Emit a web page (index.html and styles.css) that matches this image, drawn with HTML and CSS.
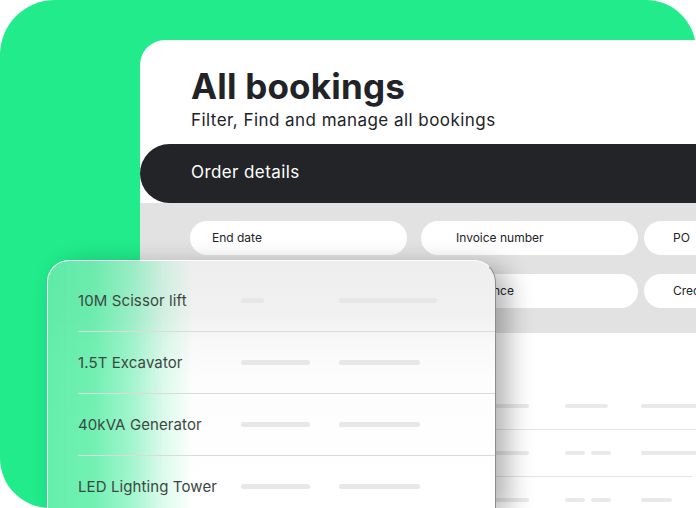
FILE: index.html
```html
<!DOCTYPE html>
<html lang="en">
<head>
<meta charset="utf-8">
<title>All bookings</title>
<link rel="stylesheet" href="styles.css">
</head>
<body>
<div class="stage">
  <div class="card">
    <div class="head">
      <h1 class="title">All bookings</h1>
      <p class="sub">Filter, Find and manage all bookings</p>
    </div>
    <div class="bar">Order details</div>
    <div class="filters">
      <div class="frow">
        <div class="pill p1">End date</div>
        <div class="pill p2">Invoice number</div>
        <div class="pill p3">PO</div>
      </div>
      <div class="frow">
        <div class="pill p1">Start date</div>
        <div class="pill p2">Reference</div>
        <div class="pill p3">Credit note</div>
      </div>
    </div>
    <div class="table">
      <div class="trow">
        <div class="cell"><span class="sk wa"></span></div>
        <div class="cell"><span class="sk wb"></span></div>
        <div class="cell"><span class="sk wc"></span></div>
      </div>
      <div class="trow short">
        <div class="cell"><span class="sk wa"></span></div>
        <div class="cell"><span class="sk ws"></span><span class="sk ws2"></span></div>
        <div class="cell"><span class="sk wc"></span></div>
      </div>
      <div class="trow last">
        <div class="cell"><span class="sk wa"></span></div>
        <div class="cell"><span class="sk ws"></span><span class="sk ws2"></span></div>
        <div class="cell"><span class="sk wd"></span></div>
      </div>
    </div>
  </div>

  <div class="glass">
    <div class="grow first">
      <span class="gname">10M Scissor lift</span>
      <span class="gcol"><span class="sk g1s"></span></span>
      <span class="gcol"><span class="sk g2l"></span></span>
    </div>
    <div class="grow">
      <span class="gname">1.5T Excavator</span>
      <span class="gcol"><span class="sk g1"></span></span>
      <span class="gcol"><span class="sk g2"></span></span>
    </div>
    <div class="grow">
      <span class="gname">40kVA Generator</span>
      <span class="gcol"><span class="sk g1"></span></span>
      <span class="gcol"><span class="sk g2"></span></span>
    </div>
    <div class="grow">
      <span class="gname">LED Lighting Tower</span>
      <span class="gcol"><span class="sk g1"></span></span>
      <span class="gcol"><span class="sk g2"></span></span>
    </div>
  </div>
</div>
</body>
</html>
```

FILE: styles.css
```css
html, body {
  margin: 0;
  padding: 0;
  width: 696px;
  height: 508px;
  overflow: hidden;
  background: #ffffff;
  font-family: "Inter", "Noto Sans", "DejaVu Sans", sans-serif;
}

.stage {
  position: relative;
  width: 696px;
  height: 508px;
  box-sizing: border-box;
  padding: 40px 0 0 140px;
  background: #21eb8b;
  border-radius: 55px 50px 50px 50px;
}

.card {
  width: 556px;
  height: 468px;
  background: #ffffff;
  border-radius: 25px 0 0 0;
  overflow: hidden;
}

.head {
  padding: 26px 0 0 51px;
}

.title {
  margin: 0;
  font-size: 35px;
  line-height: 40px;
  font-weight: 700;
  color: #222328;
  letter-spacing: 0.2px;
}

.sub {
  margin: 4px 0 0;
  font-size: 17px;
  line-height: 20px;
  color: #222328;
  letter-spacing: 0.45px;
}

.bar {
  margin-top: 14px;
  height: 59px;
  box-sizing: border-box;
  padding-left: 51px;
  background: #232428;
  border-radius: 30px 0 0 30px;
  color: #ffffff;
  font-size: 17px;
  line-height: 57px;
  letter-spacing: 0.4px;
}

.filters {
  background: #e2e2e2;
  padding: 18px 0 25px 50px;
  display: flex;
  flex-direction: column;
  gap: 19px;
}

.frow {
  display: flex;
}

.pill {
  flex-shrink: 0;
  height: 34px;
  box-sizing: border-box;
  background: #ffffff;
  border-radius: 17px;
  font-size: 12px;
  line-height: 34px;
  color: #222328;
  white-space: nowrap;
  overflow: hidden;
}

.p1 { width: 217px; padding-left: 22px; }
.p2 { width: 217px; padding-left: 35px; margin-left: 14px; }
.p3 { width: 200px; padding-left: 29px; margin-left: 6px; }

.table {
  padding-top: 50px;
}

.trow {
  height: 46px;
  border-bottom: 1px solid #e4e4e4;
  display: grid;
  grid-template-columns: 105px 76px 1fr;
  padding-left: 320px;
  align-items: center;
}

.trow.short {
  margin-right: 4px;
}

.trow.last {
  border-bottom: none;
}

.cell {
  display: flex;
  gap: 6px;
  align-items: center;
}

.sk {
  display: block;
  height: 4px;
  border-radius: 3px;
  background: #e9e9e9;
}

.wa { width: 69px; }
.wb { width: 43px; }
.ws { width: 20px; }
.ws2 { width: 20px; }
.wc { width: 80px; }
.wd { width: 31px; }

.glass {
  position: absolute;
  left: 47px;
  top: 260px;
  width: 449px;
  height: 248px;
  box-sizing: border-box;
  padding-top: 9px;
  border: 1.5px solid rgba(255, 255, 255, 0.95);
  border-right: 1px solid #8c8c8c;
  border-bottom: none;
  border-radius: 22px 22px 0 0;
  background:
    linear-gradient(90deg,
      rgba(40, 233, 140, 0.72) 0px,
      rgba(40, 233, 140, 0.66) 45px,
      rgba(40, 233, 140, 0.42) 85px,
      rgba(40, 233, 140, 0.16) 115px,
      rgba(40, 233, 140, 0) 145px),
    linear-gradient(180deg, #eeeeee 0px, #f1f1f1 55px, #f8f8f8 80px, #fdfdfd 120px, #ffffff 100%);
  box-shadow: 12px 6px 26px rgba(0, 0, 0, 0.3);
}

.grow {
  height: 61px;
  margin-left: 30px;
  border-bottom: 1px solid #d9dcda;
  display: flex;
  align-items: center;
}

.grow:last-child {
  border-bottom: none;
}

.gname {
  width: 163px;
  font-size: 15px;
  color: #3b4841;
  letter-spacing: 0.1px;
  white-space: nowrap;
}

.gcol {
  width: 98px;
  display: flex;
}

.g1s { width: 23px; }
.g1 { width: 69px; }
.g2 { width: 81px; }
.g2l { width: 139px; }

.glass .sk {
  height: 5px;
  background: #e6e8e7;
}
```
